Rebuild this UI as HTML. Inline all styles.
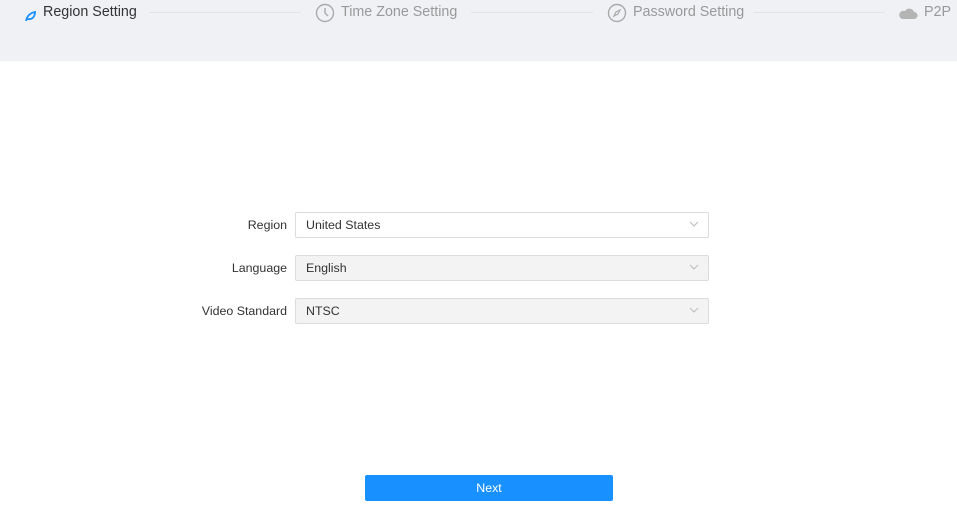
<!DOCTYPE html>
<html><head><style>
body{margin:0;width:957px;height:519px;background:#fff;font-family:"Liberation Sans",sans-serif;position:relative;overflow:hidden}
.top{position:absolute;left:0;top:0;width:957px;height:61px;background:#f0f1f5}
.t{position:absolute;top:4px;font-size:14.3px;color:#999;white-space:nowrap}
.line{position:absolute;top:12px;height:1px;background:#e2e3e7}
.lab{position:absolute;right:670px;font-size:12.4px;color:#333}
.sel{position:absolute;left:295px;width:412px;height:24px;border:1px solid #dcdcdc;border-radius:2px;font-size:12.4px;color:#333;line-height:24px;box-sizing:content-box}
.sel span{position:absolute;left:10px}
.sel svg{position:absolute;right:9px;top:8px}
.btn{position:absolute;left:365px;top:475px;width:248px;height:26px;background:#1890ff;border-radius:2px;color:#fff;font-size:12.4px;text-align:center;line-height:26px}
</style></head><body>
<div class="top">
<svg style="position:absolute;left:24px;top:10px" width="12" height="12" viewBox="0 0 12 12"><path d="M2 11 C3 6 6 3 11 2 C11 7 8 10 3 9" fill="none" stroke="#1890ff" stroke-width="1.8"/></svg>
<div class="t" style="left:43px;color:#333">Region Setting</div>
<div class="line" style="left:149px;width:152px"></div>
<svg style="position:absolute;left:315px;top:3px" width="20" height="20" viewBox="0 0 20 20"><circle cx="10" cy="10" r="8.5" fill="none" stroke="#aaa" stroke-width="1.4"/><path d="M10 5v5l3 3" fill="none" stroke="#aaa" stroke-width="1.4"/></svg>
<div class="t" style="left:341px">Time Zone Setting</div>
<div class="line" style="left:471px;width:122px"></div>
<svg style="position:absolute;left:607px;top:3px" width="20" height="20" viewBox="0 0 20 20"><circle cx="10" cy="10" r="8.5" fill="none" stroke="#aaa" stroke-width="1.4"/><path d="M13 7 L9 9 L7 13 L11 11 Z" fill="none" stroke="#aaa" stroke-width="1.2"/></svg>
<div class="t" style="left:633px">Password Setting</div>
<div class="line" style="left:754px;width:131px"></div>
<svg style="position:absolute;left:898px;top:6px" width="20" height="14" viewBox="0 0 20 14"><path d="M4 13 h12 a3.5 3.5 0 0 0 0-7 a5 5 0 0 0-9-1 a4 4 0 0 0-3 8z" fill="#b4b4b4"/></svg>
<div class="t" style="left:924px">P2P</div>
</div>
<div class="lab" style="top:218px">Region</div>
<div class="sel" style="top:212px;background:#fff"><span>United States</span><svg width="10" height="6" viewBox="0 0 10 6"><path d="M1 1l4 4 4-4" fill="none" stroke="#bbb"/></svg></div>
<div class="lab" style="top:261px">Language</div>
<div class="sel" style="top:255px;background:#f3f3f3"><span>English</span><svg width="10" height="6" viewBox="0 0 10 6"><path d="M1 1l4 4 4-4" fill="none" stroke="#bbb"/></svg></div>
<div class="lab" style="top:304px">Video Standard</div>
<div class="sel" style="top:298px;background:#f3f3f3"><span>NTSC</span><svg width="10" height="6" viewBox="0 0 10 6"><path d="M1 1l4 4 4-4" fill="none" stroke="#bbb"/></svg></div>
<div class="btn">Next</div>
</body></html>
